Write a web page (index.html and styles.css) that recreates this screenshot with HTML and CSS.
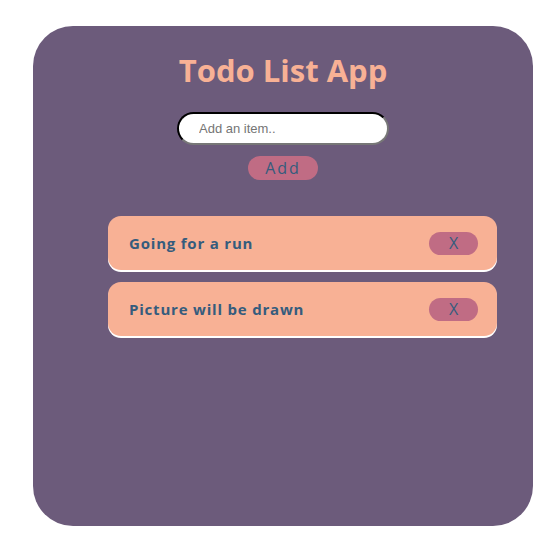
FILE: index.html
```html
<!DOCTYPE html>
<html lang="en">
<head>
  <meta charset="UTF-8">
  <title>Todo List App</title>
  <link rel="stylesheet" href="styles.css">
</head>
<body>

  <div class="app">
    <h1>Todo List App</h1>
    <div class="form">
      <input id="item" placeholder="Add an item.." />
      <button class="add-btn">Add</button>
    </div>
    <ul class="todo-list">
      <li class="todo">
        <span>Going for a run</span>
        <button class="del-btn">X</button>
      </li>
      <li class="todo">
        <span>Picture will be drawn</span>
        <button class="del-btn">X</button>
      </li>
    </ul>
  </div>

</body>
</html>
```

FILE: styles.css
```css
body {
  margin: 0;
  background: #fff;
  font-family: 'Open Sans', sans-serif;
}
.app {
  width: 500px;
  height: 500px;
  margin: 26px 0 0 33px;
  background: #6c5b7b;
  border-radius: 40px;
  overflow: hidden;
}
h1 {
  margin: 0;
  padding-top: 22px;
  text-align: center;
  font-size: 31px;
  line-height: 44px;
  font-weight: 700;
  color: #f8b195;
}
.form {
  display: flex;
  flex-direction: column;
  align-items: center;
  margin-top: 20px;
}
input {
  box-sizing: border-box;
  width: 212px;
  height: 33px;
  padding: 0 20px;
  border: 2px inset #767676;
  border-color: #222 #777 #777 #222;
  border-radius: 17px;
  font-family: 'Liberation Sans', Arial, sans-serif;
  font-size: 13px;
  outline: none;
}
input::placeholder {
  color: #757575;
}
.add-btn {
  margin-top: 11px;
  width: 70px;
  height: 24px;
  border: none;
  border-radius: 12px;
  background: #c06c84;
  color: #355c7d;
  font-family: 'Open Sans', sans-serif;
  font-size: 16px;
  letter-spacing: 2px;
  padding: 0;
  cursor: pointer;
}
.todo-list {
  list-style: none;
  margin: 36px 0 0 75px;
  padding: 0;
  width: 389px;
  display: flex;
  flex-direction: column;
  gap: 12px;
}
.todo {
  display: flex;
  align-items: center;
  justify-content: space-between;
  height: 54px;
  padding: 0 19px 0 21px;
  background: #f8b195;
  border-radius: 13px;
  box-shadow: 0 2px 0 #fff;
}
.todo span {
  font-size: 15px;
  font-weight: 700;
  letter-spacing: 0.8px;
  color: #355c7d;
}
.del-btn {
  width: 49px;
  height: 23px;
  border: none;
  border-radius: 12px;
  background: #c06c84;
  color: #355c7d;
  font-family: 'Open Sans', sans-serif;
  font-size: 16px;
  padding: 0;
  cursor: pointer;
}
```
